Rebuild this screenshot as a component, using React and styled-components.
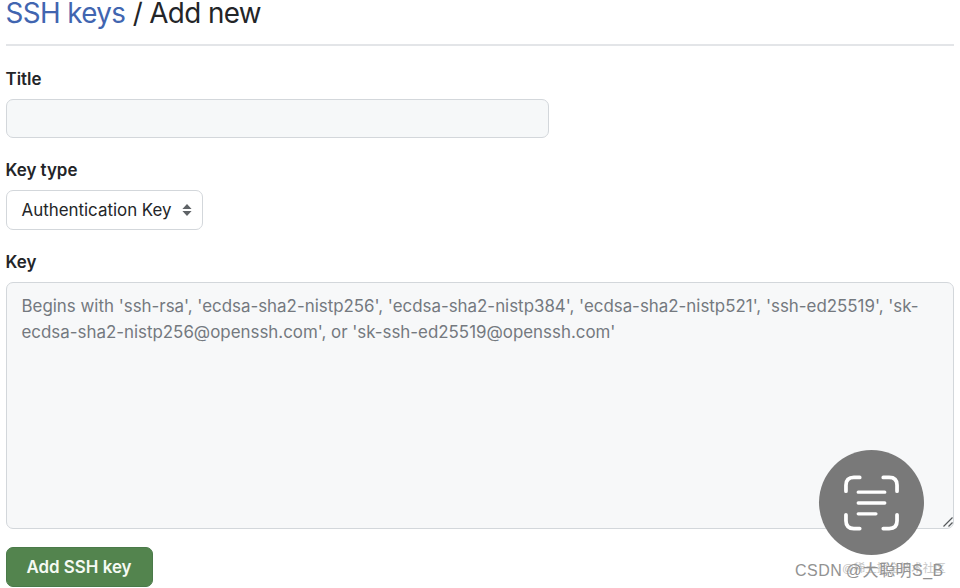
import React from 'react'
import styled, { createGlobalStyle } from 'styled-components'

const App = () => {
  return (
    <>
      <GlobalStyle />
      <Page>
        <Heading>
          <a href="#keys">SSH keys</a> / Add new
        </Heading>
        <Form>
          <Label htmlFor="title">Title</Label>
          <TitleInput id="title" type="text" />
          <Label htmlFor="type">Key type</Label>
          <SelectButton id="type" type="button">
            <span>Authentication Key</span>
            <svg width="10" height="12" viewBox="0 0 10 12" fill="#5f6367">
              <path d="M5 0 9.6 5H.4zM5 12 .4 7h9.2z" />
            </svg>
          </SelectButton>
          <Label htmlFor="key">Key</Label>
          <KeyField>
            <KeyInput
              id="key"
              placeholder="Begins with 'ssh-rsa', 'ecdsa-sha2-nistp256', 'ecdsa-sha2-nistp384', 'ecdsa-sha2-nistp521', 'ssh-ed25519', 'sk-ecdsa-sha2-nistp256@openssh.com', or 'sk-ssh-ed25519@openssh.com'"
            />
            <Grip width="10" height="10" viewBox="0 0 10 10">
              <path d="M.5 9.5 9.5 .5M5.5 9.5l4-4" />
            </Grip>
          </KeyField>
          <SubmitButton type="button">Add SSH key</SubmitButton>
        </Form>
        <ScanButton type="button" aria-label="Scan text">
          <svg width="55" height="56" viewBox="0 0 56 56">
            <path
              strokeWidth="3.8"
              d="M2 16V10Q2 2 10 2H16M40 2h6q8 0 8 8v6M54 40v6q0 8-8 8h-6M16 54H10Q2 54 2 46V40"
            />
            <path strokeWidth="3.4" d="M14.5 17h27M14.5 28h27M14.5 39h18" />
          </svg>
        </ScanButton>
        <FaintMark>@稀土掘金技术社区</FaintMark>
        <Mark>CSDN @大聪明S_B</Mark>
      </Page>
    </>
  )
}

const GlobalStyle = createGlobalStyle`
  * {
    box-sizing: border-box;
  }
  body {
    margin: 0;
    background: #fff;
    color: #232528;
    font-family: Inter, "Liberation Sans", sans-serif;
    overflow: hidden;
  }
  button, input, textarea {
    font: inherit;
    color: inherit;
  }
`

const Page = styled.main`
  position: relative;
  height: 588px;
  padding: 0 6px 0 5.5px;
  overflow: hidden;
`

const Heading = styled.h1`
  height: 46px;
  margin: 0;
  border-bottom: 2px solid #e3e5e8;
  font-size: 27.8px;
  font-weight: 400;
  line-height: 26px;
  letter-spacing: -0.6px;
  a {
    color: #4165b0;
    text-decoration: none;
  }
`

const Form = styled.form`
  display: flex;
  flex-direction: column;
  align-items: flex-start;
`

const Label = styled.label`
  margin-top: 19px;
  margin-bottom: 7px;
  font-size: 16.9px;
  font-weight: 600;
  line-height: 26px;
  &:first-child {
    margin-top: 20px;
  }
`

const TitleInput = styled.input`
  width: 543px;
  height: 39px;
  padding: 0 15px;
  border: 1.5px solid #d3d7db;
  border-radius: 7px;
  background: #f6f8f9;
`

const SelectButton = styled.button`
  display: flex;
  align-items: center;
  justify-content: space-between;
  width: 197px;
  height: 40px;
  padding: 0 10px 0 15px;
  border: 1.5px solid #d3d7db;
  border-radius: 7px;
  background: #fff;
  font-size: 16.9px;
  white-space: nowrap;
`

const KeyField = styled.div`
  position: relative;
  width: 100%;
  height: 247px;
`

const KeyInput = styled.textarea`
  display: block;
  width: 100%;
  height: 100%;
  padding: 10px 15px;
  border: 1.5px solid #d3d7db;
  border-radius: 7px;
  background: #f7f8f9;
  font-size: 16.9px;
  line-height: 26px;
  resize: none;
  &::placeholder {
    color: #74797f;
    opacity: 1;
  }
`

const Grip = styled.svg`
  position: absolute;
  right: 1px;
  bottom: 2px;
  stroke: #55585b;
  stroke-width: 1.2;
`

const SubmitButton = styled.button`
  width: 147px;
  height: 40px;
  margin-top: 18px;
  padding: 0;
  border: 1px solid #4a7a49;
  border-radius: 7px;
  background: #53844e;
  color: #f5faf3;
  font-size: 16.9px;
  font-weight: 600;
`

const ScanButton = styled.button`
  position: absolute;
  left: 819px;
  top: 450px;
  display: flex;
  align-items: center;
  justify-content: center;
  width: 105px;
  height: 105px;
  padding: 0;
  border: 0;
  border-radius: 50%;
  background: #797979;
  svg {
    fill: none;
    stroke: #fff;
    stroke-linecap: round;
  }
`

const Mark = styled.span`
  position: absolute;
  left: 795px;
  top: 560px;
  color: #929292;
  font-family: "Liberation Sans", "Noto Sans CJK SC", sans-serif;
  font-size: 16px;
  line-height: 22px;
  letter-spacing: 0.5px;
  word-spacing: -1.5px;
  white-space: nowrap;
`

const FaintMark = styled(Mark)`
  left: 842px;
  top: 557px;
  color: #c6c6c6;
  font-size: 11.5px;
  letter-spacing: 0;
`

export default App
